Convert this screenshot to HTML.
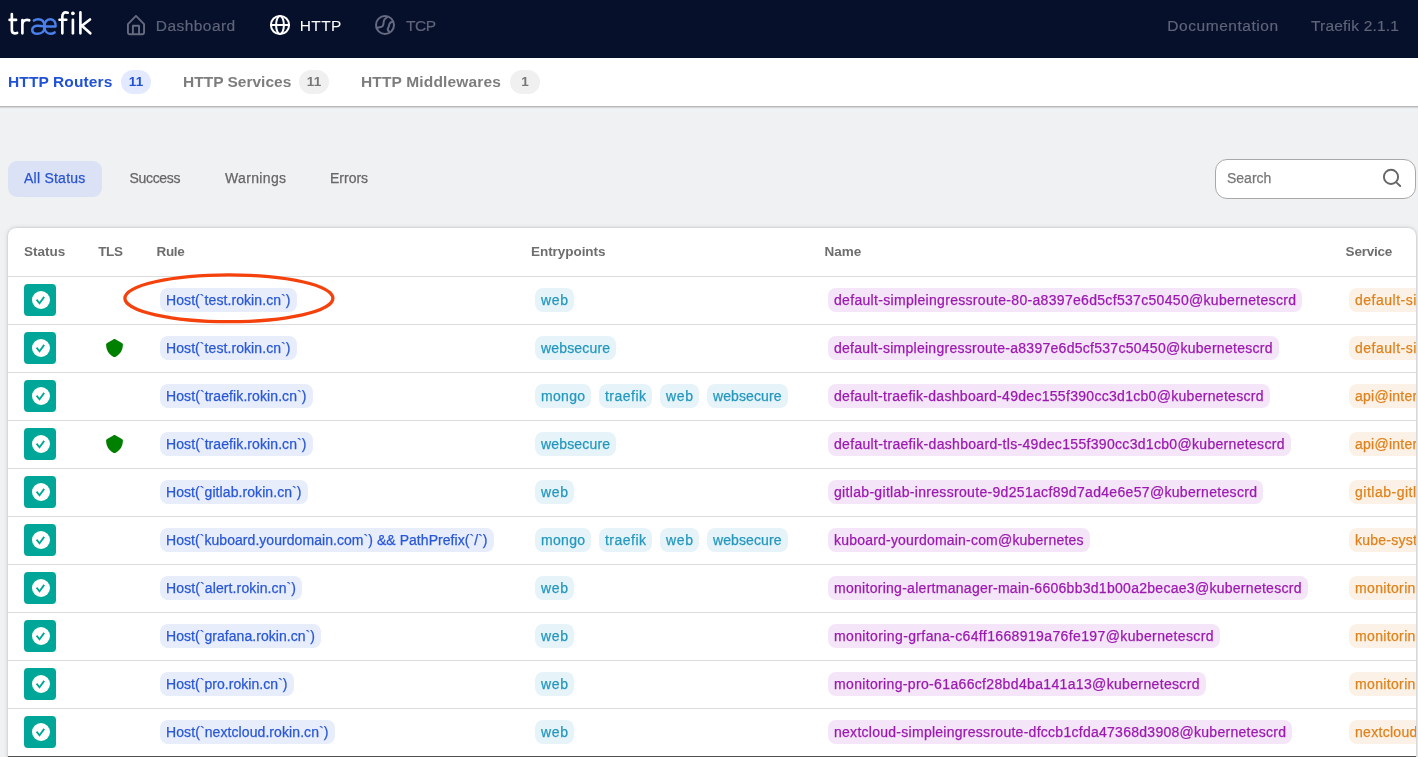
<!DOCTYPE html>
<html>
<head>
<meta charset="utf-8">
<title>Traefik</title>
<style>
*{box-sizing:border-box;margin:0;padding:0}
html,body{width:1418px;height:757px;overflow:hidden}
#wrap{position:absolute;left:0;top:0;width:1418px;height:757px;will-change:transform}
body{font-family:"Liberation Sans",sans-serif;background:#f0f1f3;position:relative;color:#222}
.abs{position:absolute;white-space:nowrap}
#hdr{position:absolute;left:0;top:0;width:1418px;height:58px;background:#06102b}
.nav{font-size:15.500px;line-height:20px;top:16.200px;color:#5f6478;-webkit-text-stroke:.18px currentColor}
.nav.on{color:#fff;-webkit-text-stroke:0}
#sub{position:absolute;left:0;top:58px;width:1418px;height:48px;background:#fff}
#sub:before{content:"";position:absolute;left:-12px;right:-12px;top:0;height:48px;box-shadow:0 1px 2px rgba(0,0,0,.35)}
.tab{font-size:15.500px;font-weight:700;line-height:20px;top:14.300px;color:#7d7d7d}
.tab.on{color:#2152d4}
.cnt{top:12px;height:24px;border-radius:12px;font-size:13.500px;font-weight:700;letter-spacing:.4px;text-indent:.4px;line-height:23.500px;text-align:center;background:#f0f0f0;color:#777}
.cnt.on{background:#e3eaff;color:#2152d4}
.flt{font-size:14px;line-height:18px;top:169.400px;-webkit-text-stroke:.25px currentColor;color:#666}
#allst{left:8px;top:161px;width:94px;height:36px;border-radius:9px;background:#dbe2f6}
#search{left:1215px;top:159px;width:201px;height:40px;border-radius:12px;background:#fff;border:1px solid #a8a8a8}
#card{position:absolute;left:8px;top:228px;width:1408px;height:540px;background:#fff;border-radius:8px;box-shadow:0 0 5px rgba(0,0,0,.15),0 0 2px rgba(0,0,0,.17);overflow:hidden}
.th{font-size:13.500px;font-weight:700;line-height:18px;top:14.500px;color:#6e6e6e}
.row{position:absolute;left:0;width:1408px;height:48px;border-top:1px solid #dcdcdc}
.st{position:absolute;left:16px;top:7px;width:32px;height:32px;border-radius:4px;background:#00a697}
.chip{position:absolute;top:11px;height:24px;border-radius:8px;font-size:14px;line-height:25px;padding:0 6px;white-space:nowrap;-webkit-text-stroke:.25px currentColor;overflow:hidden}
.st i{position:absolute;left:7.5px;top:7px;width:18px;height:18px;border-radius:50%;background:#fff}
.st svg{position:absolute;left:7px;top:7px;width:18px;height:18px;fill:none;stroke:#00a697;stroke-width:1.8;stroke-linecap:butt;stroke-linejoin:miter}
.sh{position:absolute;left:98px;top:14px;width:17px;height:18.3px;fill:#008000}
.r{background:#e8edfc;color:#2857d6}
.e{background:#e6f3f9;color:#2498bf}
.n{background:#f4e5f8;color:#9c19b0}
.s{background:#fbf1e6;color:#e0821c}
</style>
</head>
<body>
<div id="wrap">
<div id="hdr">
  <svg class="abs" style="left:0;top:0;width:100px;height:58px" viewBox="0 0 100 58" fill="none" stroke="#fff" stroke-width="2.650" stroke-linecap="round" stroke-linejoin="round">
<path d="M11.850 14.100V30C11.850 32.400 13 33.300 14.800 33.300C15.800 33.300 16.500 33.100 17.100 32.900M9.600 19.900H16.100"/>
<path d="M22.400 20V33.300M22.400 24.500C22.400 21.600 24.500 19.800 27 19.800C27.900 19.800 28.600 20 29.200 20.300"/>
<g stroke="#4a80ea" stroke-width="2.500"><path d="M33.900 20.600C35.200 19.600 36.600 19.200 38 19.200C42 19.200 44.400 21.500 44.400 25.500V28C44.400 31.500 41.500 33.700 37.800 33.700C34.500 33.700 32.200 32.200 32.200 29.900C32.200 27.200 34.800 25.500 38 25.800C40.500 26 42.500 26.400 44.400 26.400"/>
<path d="M44.400 26.400H55.600C56 22.500 54 19.200 50.600 19.200C47 19.200 44.400 22 44.400 26.400C44.400 30.800 47 33.700 50.400 33.700C52.200 33.700 53.600 33.200 54.600 32.400"/></g>
<path d="M62.350 33.300V16.500C62.350 13.600 63.800 12.400 65.800 12.400C66.600 12.400 67.200 12.500 67.700 12.700M59.500 19.700H66.300"/>
<path d="M72.900 19.900V33.300"/><circle cx="72.900" cy="13.300" r="1.850" fill="#fff" stroke="none"/>
<path d="M80.400 12.400V33.300M81.900 25.700L90 19.500M81.900 25.700L90.300 33.300"/>
</svg>
  <svg class="abs" style="left:124px;top:13px;width:24px;height:24px" viewBox="0 0 24 24" fill="none" stroke="#656a7e" stroke-width="1.900" stroke-linejoin="round" stroke-linecap="round"><path d="M3.950 19.600V11.100L12 2.900L20.050 11.100V19.600a1.600 1.600 0 0 1-1.600 1.600H5.550a1.600 1.600 0 0 1-1.600-1.600z"/><path d="M8.900 21.200V12.800H15.050V21.200"/></svg>
  <svg class="abs" style="left:267.600px;top:13px;width:24px;height:24px" viewBox="0 0 24 24" fill="none" stroke="#fff" stroke-width="2"><circle cx="12" cy="12" r="9.100"/><ellipse cx="12" cy="12" rx="3.900" ry="9.100"/><path d="M3 12H21"/></svg>
  <svg class="abs" style="left:373.400px;top:13px;width:24px;height:24px" viewBox="0 0 24 24" fill="none" stroke="#656a80" stroke-width="2" stroke-linecap="round"><circle cx="12" cy="12" r="9"/><path d="M14.200 4C12 5.500 10.900 6.500 10.700 8.500C10.500 10.500 10.800 12 9.500 13.300C8 14.600 5.500 14.200 3.600 14.800"/><path d="M20 8.800C18 9 17 9.400 16.500 10.800C16 12.500 16 13.500 15.200 14.800C14.300 16 14.800 17.300 16 18.500"/></svg>
  <div class="abs nav" style="left:155.800px;letter-spacing:.45px">Dashboard</div>
  <div class="abs nav on" style="left:299.700px;letter-spacing:.4px">HTTP</div>
  <div class="abs nav" style="left:406px;letter-spacing:-.45px">TCP</div>
  <div class="abs nav" style="left:1167.300px;letter-spacing:.55px">Documentation</div>
  <div class="abs nav" style="left:1311px;letter-spacing:.2px">Traefik 2.1.1</div>
</div>
<div id="sub">
  <div class="abs tab on" style="left:8px;letter-spacing:.11px">HTTP Routers</div>
  <div class="abs cnt on" style="left:121px;width:30px">11</div>
  <div class="abs tab" style="left:183px;letter-spacing:0">HTTP Services</div>
  <div class="abs cnt" style="left:299px;width:30px">11</div>
  <div class="abs tab" style="left:361px;letter-spacing:.15px">HTTP Middlewares</div>
  <div class="abs cnt" style="left:510px;width:30px">1</div>
</div>
<div id="allst" class="abs"></div>
<div class="abs flt" style="left:24px;color:#2a55d0;letter-spacing:.24px">All Status</div>
<div class="abs flt" style="left:129.500px;letter-spacing:-.32px">Success</div>
<div class="abs flt" style="left:225px;letter-spacing:.35px">Warnings</div>
<div class="abs flt" style="left:330px">Errors</div>
<div id="search" class="abs"></div>
<div class="abs flt" style="left:1227px;color:#777">Search</div>
<svg class="abs" style="left:1379px;top:165px;width:24px;height:24px" viewBox="0 0 24 24" fill="none" stroke="#666" stroke-width="1.900" stroke-linecap="round"><circle cx="12" cy="11.900" r="7.100"/><path d="M17.300 17.400L21.200 21"/></svg>
<div id="card">
  <div class="abs th" style="left:16px;letter-spacing:-.01px">Status</div>
  <div class="abs th" style="left:90.200px;letter-spacing:-.35px">TLS</div>
  <div class="abs th" style="left:148.500px;letter-spacing:-.35px">Rule</div>
  <div class="abs th" style="left:523px;letter-spacing:-.05px">Entrypoints</div>
  <div class="abs th" style="left:816.400px;letter-spacing:.07px">Name</div>
  <div class="abs th" style="left:1337.600px;letter-spacing:-.22px">Service</div>
<div class="row" style="top:48px"><i class="st"><i></i><svg viewBox="0 0 18 18"><path d="M5.5 8.6L8.5 12.3 13.2 5.9"/></svg></i><span class="chip r" style="left:152px;width:136.5px;letter-spacing:0.079px">Host(`test.rokin.cn`)</span><span class="chip e" style="left:527px;width:39.0px;letter-spacing:0.656px">web</span><span class="chip n" style="left:820px;width:474.0px;letter-spacing:0.313px">default-simpleingressroute-80-a8397e6d5cf537c50450@kubernetescrd</span><span class="chip s" style="left:1341px;width:200px;letter-spacing:0.50px">default-simpleingressroute</span></div>
<div class="row" style="top:96px"><i class="st"><i></i><svg viewBox="0 0 18 18"><path d="M5.5 8.6L8.5 12.3 13.2 5.9"/></svg></i><svg class="sh" viewBox="0 0 17 18.3"><path d="M8.5 0.1C9 0.1 9.3 0.3 9.7 0.5L15.9 3.9C16.6 4.3 17 4.9 16.9 5.7C16.7 11.4 14.2 15 9.7 17.7C9 18.2 8 18.2 7.3 17.7C2.800 15 0.300 11.400 0.100 5.700C0 4.900 0.400 4.300 1.100 3.900L7.300 0.500C7.700 0.300 8 0.100 8.500 0.100Z"/></svg><span class="chip r" style="left:152px;width:136.5px;letter-spacing:0.079px">Host(`test.rokin.cn`)</span><span class="chip e" style="left:527px;width:81.0px;letter-spacing:0.162px">websecure</span><span class="chip n" style="left:820px;width:450.5px;letter-spacing:0.274px">default-simpleingressroute-a8397e6d5cf537c50450@kubernetescrd</span><span class="chip s" style="left:1341px;width:200px;letter-spacing:0.50px">default-simpleingressroute</span></div>
<div class="row" style="top:144px"><i class="st"><i></i><svg viewBox="0 0 18 18"><path d="M5.5 8.6L8.5 12.3 13.2 5.9"/></svg></i><span class="chip r" style="left:152px;width:152.5px;letter-spacing:0.088px">Host(`traefik.rokin.cn`)</span><span class="chip e" style="left:527px;width:56.0px;letter-spacing:0.297px">mongo</span><span class="chip e" style="left:591px;width:53.0px;letter-spacing:0.479px">traefik</span><span class="chip e" style="left:652px;width:39.0px;letter-spacing:0.656px">web</span><span class="chip e" style="left:699px;width:80.5px;letter-spacing:0.100px">websecure</span><span class="chip n" style="left:820px;width:441.5px;letter-spacing:0.298px">default-traefik-dashboard-49dec155f390cc3d1cb0@kubernetescrd</span><span class="chip s" style="left:1341px;width:200px;letter-spacing:0.25px">api@internal</span></div>
<div class="row" style="top:192px"><i class="st"><i></i><svg viewBox="0 0 18 18"><path d="M5.5 8.6L8.5 12.3 13.2 5.9"/></svg></i><svg class="sh" viewBox="0 0 17 18.3"><path d="M8.5 0.1C9 0.1 9.3 0.3 9.7 0.5L15.9 3.9C16.6 4.3 17 4.9 16.9 5.7C16.7 11.4 14.2 15 9.7 17.7C9 18.2 8 18.2 7.3 17.7C2.800 15 0.300 11.400 0.100 5.700C0 4.900 0.400 4.300 1.100 3.900L7.300 0.500C7.700 0.300 8 0.100 8.500 0.100Z"/></svg><span class="chip r" style="left:152px;width:152.5px;letter-spacing:0.088px">Host(`traefik.rokin.cn`)</span><span class="chip e" style="left:527px;width:81.0px;letter-spacing:0.162px">websecure</span><span class="chip n" style="left:820px;width:462.5px;letter-spacing:0.316px">default-traefik-dashboard-tls-49dec155f390cc3d1cb0@kubernetescrd</span><span class="chip s" style="left:1341px;width:200px;letter-spacing:0.25px">api@internal</span></div>
<div class="row" style="top:240px"><i class="st"><i></i><svg viewBox="0 0 18 18"><path d="M5.5 8.6L8.5 12.3 13.2 5.9"/></svg></i><span class="chip r" style="left:152px;width:147.5px;letter-spacing:0.076px">Host(`gitlab.rokin.cn`)</span><span class="chip e" style="left:527px;width:39.0px;letter-spacing:0.656px">web</span><span class="chip n" style="left:820px;width:435.0px;letter-spacing:0.319px">gitlab-gitlab-inressroute-9d251acf89d7ad4e6e57@kubernetescrd</span><span class="chip s" style="left:1341px;width:200px;letter-spacing:0.50px">gitlab-gitlab-ce</span></div>
<div class="row" style="top:288px"><i class="st"><i></i><svg viewBox="0 0 18 18"><path d="M5.5 8.6L8.5 12.3 13.2 5.9"/></svg></i><span class="chip r" style="left:152px;width:333.5px;letter-spacing:0.052px">Host(`kuboard.yourdomain.com`) &amp;&amp; PathPrefix(`/`)</span><span class="chip e" style="left:527px;width:56.0px;letter-spacing:0.297px">mongo</span><span class="chip e" style="left:591px;width:53.0px;letter-spacing:0.479px">traefik</span><span class="chip e" style="left:652px;width:39.0px;letter-spacing:0.656px">web</span><span class="chip e" style="left:699px;width:80.5px;letter-spacing:0.100px">websecure</span><span class="chip n" style="left:820px;width:261.5px;letter-spacing:0.203px">kuboard-yourdomain-com@kubernetes</span><span class="chip s" style="left:1341px;width:200px;letter-spacing:0.25px">kube-system-kuboard</span></div>
<div class="row" style="top:336px"><i class="st"><i></i><svg viewBox="0 0 18 18"><path d="M5.5 8.6L8.5 12.3 13.2 5.9"/></svg></i><span class="chip r" style="left:152px;width:142.0px;letter-spacing:0.115px">Host(`alert.rokin.cn`)</span><span class="chip e" style="left:527px;width:39.0px;letter-spacing:0.656px">web</span><span class="chip n" style="left:820px;width:479.5px;letter-spacing:0.281px">monitoring-alertmanager-main-6606bb3d1b00a2becae3@kubernetescrd</span><span class="chip s" style="left:1341px;width:200px;letter-spacing:0.35px">monitoring-alertmanager</span></div>
<div class="row" style="top:384px"><i class="st"><i></i><svg viewBox="0 0 18 18"><path d="M5.5 8.6L8.5 12.3 13.2 5.9"/></svg></i><span class="chip r" style="left:152px;width:161.0px;letter-spacing:0.051px">Host(`grafana.rokin.cn`)</span><span class="chip e" style="left:527px;width:39.0px;letter-spacing:0.656px">web</span><span class="chip n" style="left:820px;width:391.5px;letter-spacing:0.376px">monitoring-grfana-c64ff1668919a76fe197@kubernetescrd</span><span class="chip s" style="left:1341px;width:200px;letter-spacing:0.35px">monitoring-grafana</span></div>
<div class="row" style="top:432px"><i class="st"><i></i><svg viewBox="0 0 18 18"><path d="M5.5 8.6L8.5 12.3 13.2 5.9"/></svg></i><span class="chip r" style="left:152px;width:133.5px;letter-spacing:0.048px">Host(`pro.rokin.cn`)</span><span class="chip e" style="left:527px;width:39.0px;letter-spacing:0.656px">web</span><span class="chip n" style="left:820px;width:377.5px;letter-spacing:0.346px">monitoring-pro-61a66cf28bd4ba141a13@kubernetescrd</span><span class="chip s" style="left:1341px;width:200px;letter-spacing:0.35px">monitoring-pro</span></div>
<div class="row" style="top:480px"><i class="st"><i></i><svg viewBox="0 0 18 18"><path d="M5.5 8.6L8.5 12.3 13.2 5.9"/></svg></i><span class="chip r" style="left:152px;width:174.5px;letter-spacing:0.089px">Host(`nextcloud.rokin.cn`)</span><span class="chip e" style="left:527px;width:39.0px;letter-spacing:0.656px">web</span><span class="chip n" style="left:820px;width:464.0px;letter-spacing:0.270px">nextcloud-simpleingressroute-dfccb1cfda47368d3908@kubernetescrd</span><span class="chip s" style="left:1341px;width:200px;letter-spacing:0.30px">nextcloud-nextcloud</span></div>
</div>
<svg class="abs" style="left:110px;top:262px;width:240px;height:74px" viewBox="0 0 240 74"><ellipse cx="118.9" cy="36.3" rx="104" ry="23.400" fill="none" stroke="#f5420d" stroke-width="3.300"/></svg>
<div class="abs" style="left:8px;top:756px;width:1408px;height:1px;background:#505050"></div>
</div>
</body>
</html>
